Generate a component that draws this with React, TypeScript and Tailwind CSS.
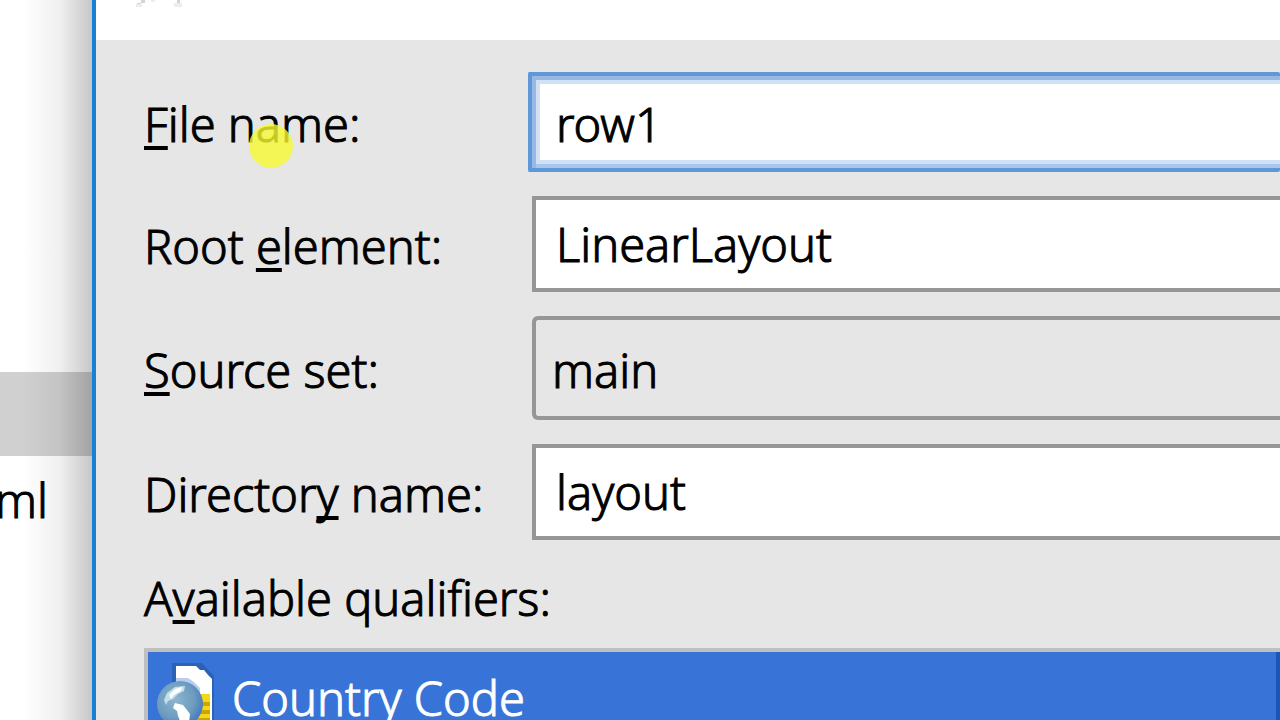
import type { ReactNode } from "react";

const baseText = "text-[47px] leading-[64px] font-light [-webkit-text-stroke-width:1px]";
const fieldText = `${baseText} text-black`;

function Key({ children }: { children: string }) {
  return (
    <span className="underline decoration-black decoration-4 underline-offset-4 [text-decoration-skip-ink:none]">
      {children}
    </span>
  );
}

function Label({ htmlFor, children }: { htmlFor: string; children: ReactNode }) {
  return (
    <label htmlFor={htmlFor} className={`${fieldText} whitespace-nowrap pt-1`}>
      {children}
    </label>
  );
}

function ResourceIcon() {
  return (
    <svg width="64" height="72" viewBox="0 0 64 72" aria-hidden="true">
      <defs>
        <radialGradient id="globe" cx="40%" cy="40%" r="60%">
          <stop offset="0" stopColor="#8fb6cf" />
          <stop offset="0.7" stopColor="#6c9bbf" />
          <stop offset="1" stopColor="#4a7fbe" />
        </radialGradient>
      </defs>
      <path d="M16 1h30l12 13v58H16z" fill="#2c62b4" />
      <path d="M20 4h20l4 4h4l4 5 4 4v55H20z" fill="#fff" />
      <path d="M20 16h12l6 4 6 6v8H20z" fill="#b9cdf0" />
      <path d="M40 32h14v40H40z" fill="#f5d716" />
      <path d="M40 40h14v4H40zM40 48h14v4H40zM40 56h14v4H40z" fill="#c9a700" />
      <circle cx="24" cy="42" r="23" fill="url(#globe)" />
      <path d="M8 38l3-7 8-6 10-1-1 5-6 3-5 5-5 2-2 4z" fill="#c3dfec" />
      <path d="M13 33l6-6 7-2-1 4-7 4-3 4z" fill="#fff" />
      <path d="M19 41l8 2 4 5 3 4-1 8-8 1-3-7-1-5-4-3z" fill="#fff" />
    </svg>
  );
}

export default function App() {
  return (
    <main className="relative flex h-screen overflow-hidden bg-white font-['Noto_Sans','Noto_Sans_CJK_KR',sans-serif]">
      <aside className="relative w-[92px] shrink-0 overflow-hidden pt-[372px]">
        <div className="h-[84px] bg-[#d0d0d0]" />
        <div className="flex justify-end pr-11 pt-3">
          <span className={fieldText}>ml</span>
        </div>
        <div className="absolute inset-0 bg-linear-to-r from-black/0 from-25% via-black/6 via-65% to-black/22" />
      </aside>

      <section className="flex min-w-0 flex-1 flex-col border-l-4 border-[#1a80d2] bg-[#e6e6e6]">
        <header className="h-10 shrink-0 bg-white pl-10">
          <svg width="52" height="8" viewBox="0 0 52 8" aria-hidden="true">
            <path d="M5 0h4v3H5zM1 3h4v4H1zM41 0h3v4h-3z" fill="#d4d4d4" />
            <path d="M0 4h6v3H0zM15 0h4v2h-4zM38 3h8v4h-8z" fill="#ededed" />
          </svg>
        </header>

        <form className="flex flex-col pl-12 pt-8">
          <div className="grid grid-cols-[384px_1fr] grid-rows-[100px_96px_104px_96px] items-center gap-y-6">
            <Label htmlFor="file-name">
              <Key>F</Key>ile name:
            </Label>
            <input
              id="file-name"
              defaultValue="row1"
              className={`${fieldText} h-full min-w-0 rounded-xs border-4 border-r-0 border-[#5f98d8] bg-white pl-6 pt-1 shadow-[inset_0_4px_#98b8e2,inset_4px_0_#98b8e2,inset_0_-4px_#a9c7ee,inset_0_8px_#d0e0f5,inset_8px_0_#d0e0f5,inset_0_-8px_#d0e0f5] outline-none`}
            />

            <Label htmlFor="root-element">
              Root <Key>e</Key>lement:
            </Label>
            <input
              id="root-element"
              defaultValue="LinearLayout"
              className={`${fieldText} ml-1 h-full min-w-0 border-4 border-r-0 border-[#969696] bg-white pl-5 outline-none`}
            />

            <Label htmlFor="source-set">
              <Key>S</Key>ource set:
            </Label>
            <select
              id="source-set"
              className={`${fieldText} ml-1 h-full min-w-0 appearance-none rounded-l-md border-4 border-r-0 border-[#969696] bg-[#e6e6e6] pl-4 pt-1 outline-none`}
            >
              <option>main</option>
            </select>

            <Label htmlFor="directory-name">
              Director<Key>y</Key> name:
            </Label>
            <input
              id="directory-name"
              defaultValue="layout"
              className={`${fieldText} ml-1 h-full min-w-0 border-4 border-r-0 border-[#969696] bg-white pl-5 outline-none`}
            />
          </div>

          <h2 id="qualifiers" className={`${fieldText} pt-[26px] pb-[18px]`}>
            A<Key>v</Key>ailable qualifiers:
          </h2>
          <ul
            role="listbox"
            aria-labelledby="qualifiers"
            className="h-[200px] border-t-4 border-l-4 border-[#bfbfbf] bg-white"
          >
            <li
              role="option"
              aria-selected="true"
              className="flex h-[92px] items-center gap-3 border-r-4 border-[#1857b8] bg-[#3874d8] pl-2"
            >
              <ResourceIcon />
              <span className={`${baseText} text-white`}>Country Code</span>
            </li>
          </ul>
        </form>
      </section>

      <div className="pointer-events-none absolute top-[124px] left-[249px] size-11 rounded-full bg-[#f6fa30]/80" />
    </main>
  );
}
